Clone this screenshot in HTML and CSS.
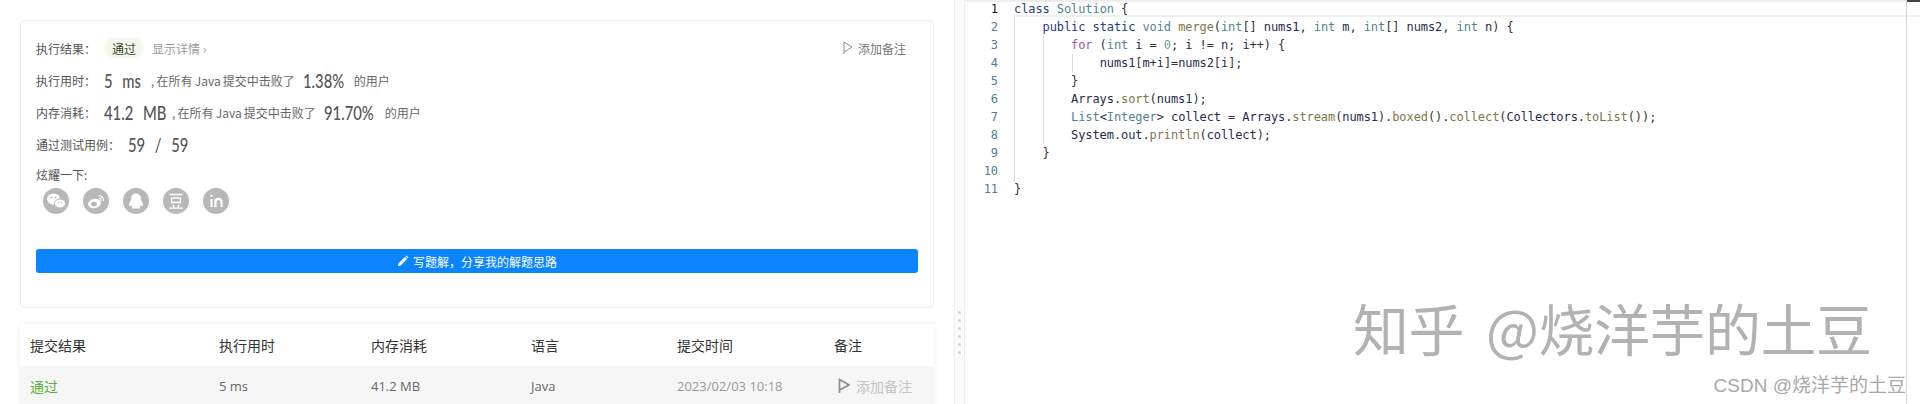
FILE: index.html
```html
<!DOCTYPE html>
<html lang="zh-CN">
<head>
<meta charset="utf-8">
<title>提交结果</title>
<link rel="stylesheet" href="styles.css">
</head>
<body>
<main class="page">
  <section class="left">
    <div class="card">
      <div class="row row-result">
        <span class="label">执行结果：</span>
        <span class="pill">通过</span>
        <span class="details">显示详情 ›</span>
        <span class="note">
          <svg class="flag" viewBox="0 0 10 14" width="10" height="14"><path d="M1 13V1l8 5-8 5" fill="none" stroke="#8a8a8a" stroke-width="1"/></svg>添加备注
        </span>
      </div>
      <div class="row">
        <span class="label">执行用时：</span>
        <b class="big w39">5 ms</b>
        <span class="sep">, 在所有 Java 提交中击败了</span>
        <b class="big pct w43">1.38%</b>
        <span class="sep">的用户</span>
      </div>
      <div class="row">
        <span class="label">内存消耗：</span>
        <b class="big w60">41.2 MB</b>
        <span class="sep">, 在所有 Java 提交中击败了</span>
        <b class="big pct w53">91.70%</b>
        <span class="sep">的用户</span>
      </div>
      <div class="row row-cases">
        <span class="label">通过测试用例：</span>
        <b class="big w56">59 / 59</b>
      </div>
      <div class="share-label">炫耀一下:</div>
      <div class="share">
        <span class="circle"><svg viewBox="0 0 26 26" width="26" height="26"><ellipse cx="10.500" cy="11" rx="6.500" ry="5.500" fill="#fff"/><ellipse cx="17" cy="15.500" rx="5.500" ry="4.500" fill="#fff" stroke="#b8b8b8"/><circle cx="8.500" cy="9.500" r="1" fill="#b8b8b8"/><circle cx="12.500" cy="9.500" r="1" fill="#b8b8b8"/><circle cx="15.500" cy="14.500" r=".8" fill="#b8b8b8"/><circle cx="19" cy="14.500" r=".8" fill="#b8b8b8"/></svg></span>
        <span class="circle"><svg viewBox="0 0 26 26" width="26" height="26"><ellipse cx="11.500" cy="15.500" rx="6.500" ry="4.600" fill="#fff" transform="rotate(-12 11.500 15.500)"/><ellipse cx="11" cy="16" rx="3" ry="2.300" fill="#b8b8b8"/><path d="M15.500 7.500a5 5 0 0 1 5 5.500M15.800 10a2.500 2.500 0 0 1 2.300 2.800" fill="none" stroke="#fff" stroke-width="1.200"/></svg></span>
        <span class="circle"><svg viewBox="0 0 26 26" width="26" height="26"><path d="M13 5.500c-3.400 0-5 2.700-5 5.500 0 1-.9 2.500-1.700 4.500-.6 1.700-.2 2.700.3 2.700.5 0 1-.6 1.400-1.300.3 1 .9 1.800 1.700 2.400-1 .4-1.500.8-1.500 1.200h9.600c0-.4-.5-.8-1.500-1.200.8-.6 1.400-1.400 1.700-2.400.4.700.9 1.300 1.400 1.300.5 0 .9-1 .3-2.700-.8-2-1.700-3.500-1.700-4.500 0-2.800-1.600-5.500-5-5.500z" fill="#fff"/></svg></span>
        <span class="circle"><svg viewBox="0 0 26 26" width="26" height="26"><path d="M6.500 6.500h13M8.500 10h9v4.500h-9zM10 16.500l1.300 3.500M16 16.500L14.700 20M6 20.200h14" fill="none" stroke="#fff" stroke-width="1.300"/></svg></span>
        <span class="circle"><svg viewBox="0 0 26 26" width="26" height="26"><path d="M8.500 11v8M8.500 6.800v2M12.500 19v-8M12.500 14c0-4 6-4.500 6 0v5" fill="none" stroke="#fff" stroke-width="2.200"/></svg></span>
      </div>
      <div class="cta">
        <svg viewBox="0 0 12 12" width="12" height="12"><path d="M1 11l.6-2.800 6.300-6.300 2.200 2.200-6.300 6.300zM8.600 1.200l.8-.6 2 2-.6.800z" fill="#fff"/></svg>写题解，分享我的解题思路
      </div>
    </div>
    <div class="table">
      <div class="t-row t-head">
        <span>提交结果</span><span>执行用时</span><span>内存消耗</span><span>语言</span><span>提交时间</span><span>备注</span>
      </div>
      <div class="t-row t-body">
        <span class="ok">通过</span><span>5 ms</span><span>41.2 MB</span><span>Java</span><span class="muted">2023/02/03 10:18</span>
        <span class="t-note"><svg viewBox="0 0 12 16" width="12" height="16"><path d="M1.500 15V1.500L11 7l-9.500 5" fill="none" stroke="#8f8f8f" stroke-width="1.700"/></svg>添加备注</span>
      </div>
    </div>
  </section>
  <div class="splitter"><i></i><i></i><i></i><i></i><i></i><i></i></div>
  <section class="editor">
    <div class="active-line"></div>
    <div class="gutter">
      <span class="current">1</span><span>2</span><span>3</span><span>4</span><span>5</span><span>6</span><span>7</span><span>8</span><span>9</span><span>10</span><span>11</span>
    </div>
    <div class="code">
      <div class="line"><span class="k">class</span> <span class="t">Solution</span> {</div>
      <div class="line">    <span class="k">public</span> <span class="k">static</span> <span class="t">void</span> <span class="f">merge</span>(<span class="t">int</span>[] <span class="v">nums1</span>, <span class="t">int</span> <span class="v">m</span>, <span class="t">int</span>[] <span class="v">nums2</span>, <span class="t">int</span> <span class="v">n</span>) {</div>
      <div class="line">        <span class="c">for</span> (<span class="t">int</span> <span class="v">i</span> = <span class="n">0</span>; <span class="v">i</span> != <span class="v">n</span>; <span class="v">i</span>++) {</div>
      <div class="line">            <span class="v">nums1</span>[<span class="v">m</span>+<span class="v">i</span>]=<span class="v">nums2</span>[<span class="v">i</span>];</div>
      <div class="line">        }</div>
      <div class="line">        <span class="v">Arrays</span>.<span class="f">sort</span>(<span class="v">nums1</span>);</div>
      <div class="line">        <span class="t">List</span>&lt;<span class="t">Integer</span>&gt; <span class="v">collect</span> = <span class="v">Arrays</span>.<span class="f">stream</span>(<span class="v">nums1</span>).<span class="f">boxed</span>().<span class="f">collect</span>(<span class="v">Collectors</span>.<span class="f">toList</span>());</div>
      <div class="line">        <span class="v">System</span>.<span class="v">out</span>.<span class="f">println</span>(<span class="v">collect</span>);</div>
      <div class="line">    }</div>
      <div class="line"></div>
      <div class="line">}</div>
    </div>
    <div class="guide g1"></div>
    <div class="guide g2"></div>
    <div class="guide g3"></div>
    <div class="ruler"></div>
    <div class="ruler-tab"></div>
    <div class="wm-large">知乎 @烧洋芋的土豆</div>
    <div class="wm-small">CSDN @烧洋芋的土豆</div>
  </section>
</main>
</body>
</html>
```

FILE: styles.css
```css
* { box-sizing: border-box; }
html, body { margin: 0; height: 404px; overflow: hidden; background: #fff; }
body { font-family: "Noto Sans CJK SC", "Liberation Sans", sans-serif; color: #555; }
.page { display: flex; height: 404px; }
.left { width: 954px; padding: 20px 20px 0; background: #fff; display: flex; flex-direction: column; gap: 16px; overflow: hidden; }
.card { height: 288px; width: 914px; flex: none; border: 1px solid #eee; border-radius: 5px; padding: 17px 15px 0; }
.row { display: flex; align-items: center; font-size: 12px; color: #555; height: 32px; white-space: nowrap; }
.row-result { height: 20px; margin-bottom: 6px; }
.label { width: 68px; flex: none; color: #555; }
.row-cases .label { width: 92px; }
.pill { background: #f3f9ee; color: #3a4a30; border-radius: 10px; height: 20px; width: 40px; margin-right: 8px; display: flex; align-items: center; justify-content: center; }
.details { color: #999; }
.note { margin-left: auto; margin-right: 12px; color: #777; display: flex; align-items: center; gap: 5px; }
/* The original uses a condensed DIN-style face: Lato squeezed to the same measure. */
.big { font-family: "Lato", "Liberation Sans", sans-serif; font-weight: 500; font-size: 20px; word-spacing: 8px; color: #555; flex: none; transform: scaleX(.74); transform-origin: left center; }
.w39 { width: 39px; }
.w43 { width: 43px; }
.w53 { width: 53px; }
.w56 { width: 56px; }
.w60 { width: 60px; }
.sep { margin-left: 8px; font-size: 12px; word-spacing: -.5px; color: #666; }
.pct { margin-left: 8px; }
.share-label { font-size: 12px; color: #555; margin-top: 6px; line-height: 18px; }
.share { display: flex; gap: 14px; margin: 4px 0 0 7px; }
.circle { width: 26px; height: 26px; border-radius: 50%; background: #b8b8b8; display: block; }
.circle svg { display: block; }
.cta { margin-top: 35px; height: 24px; background: #0a84ff; border-radius: 3px; color: #fff; font-size: 12px; display: flex; align-items: center; justify-content: center; gap: 4px; }
.table { width: 914px; background: #fff; box-shadow: 0 0 6px rgba(0,0,0,.08); flex: 1; border-radius: 3px 3px 0 0; }
.t-row { display: grid; grid-template-columns: 189px 152px 160px 146px 157px 1fr; padding-left: 10px; align-items: center; font-size: 14px; }
.t-head { height: 42px; color: #333; }
.t-body { height: 40px; background: #f6f6f6; color: #666; font-family: "Open Sans", "Noto Sans CJK SC", sans-serif; font-size: 13px; }
.ok { color: #5cb030; font-family: "Noto Sans CJK SC", sans-serif; font-size: 14px; }
.muted { color: #999; }
.t-note { color: #c4c4c4; display: flex; align-items: center; gap: 6px; margin-left: 4px; font-family: "Noto Sans CJK SC", sans-serif; font-size: 14px; }
.splitter { width: 11px; background: #fbfbfb; border-left: 1px solid #eee; border-right: 1px solid #eee; display: flex; flex-direction: column; align-items: center; gap: 5px; padding-top: 311px; }
.splitter i { width: 3px; height: 3px; border-radius: 50%; background: #d5d5d5; display: block; }
.editor { position: relative; flex: 1; display: flex; background: #fff; overflow: hidden; padding-top: 2px; }
.editor::before { content: ""; position: absolute; left: 0; right: 0; top: 0; height: 2px; background: #ededed; }
.active-line { position: absolute; left: 49px; right: 0; top: 2px; height: 15px; border-bottom: 2px solid #efefef; }
.gutter { width: 49px; flex: none; display: flex; flex-direction: column; text-align: right; padding: 0 16px 0 0; font: 12px/18px "DejaVu Sans Mono", monospace; letter-spacing: -.09px; color: #4d8092; margin-top: -2px; }
.current { color: #1f1f1f; }
.code { margin: -2px 0 0; font: 12px/18px "DejaVu Sans Mono", monospace; letter-spacing: -.09px; color: #333; }
.line { white-space: pre; height: 18px; position: relative; }
.k { color: #24407c; }
.t { color: #4f8496; }
.f { color: #857447; }
.v { color: #1f2c4f; }
.c { color: #9a5fa3; }
.n { color: #5fa58a; }
.guide { position: absolute; width: 1px; background: #ddd; }
.g1 { left: 49px; top: 17px; height: 165px; }
.g2 { left: 78px; top: 36px; height: 108px; }
.g3 { left: 107px; top: 54px; height: 18px; }
.ruler { position: absolute; left: 941px; top: 0; bottom: 0; width: 1px; background: #d8d8d8; }
.ruler-tab { position: absolute; left: 942px; right: 0; top: 0; height: 2px; background: #444; }
.wm-large { position: absolute; left: 388px; top: 297px; font-size: 56px; line-height: 60px; color: #b2b2b2; white-space: nowrap; letter-spacing: -.5px; word-spacing: 10px; }
.wm-small { position: absolute; right: 14px; top: 375px; font-size: 19px; line-height: 22px; color: #a8a8a8; white-space: nowrap; font-family: "Liberation Sans", "Noto Sans CJK SC", sans-serif; }
```
